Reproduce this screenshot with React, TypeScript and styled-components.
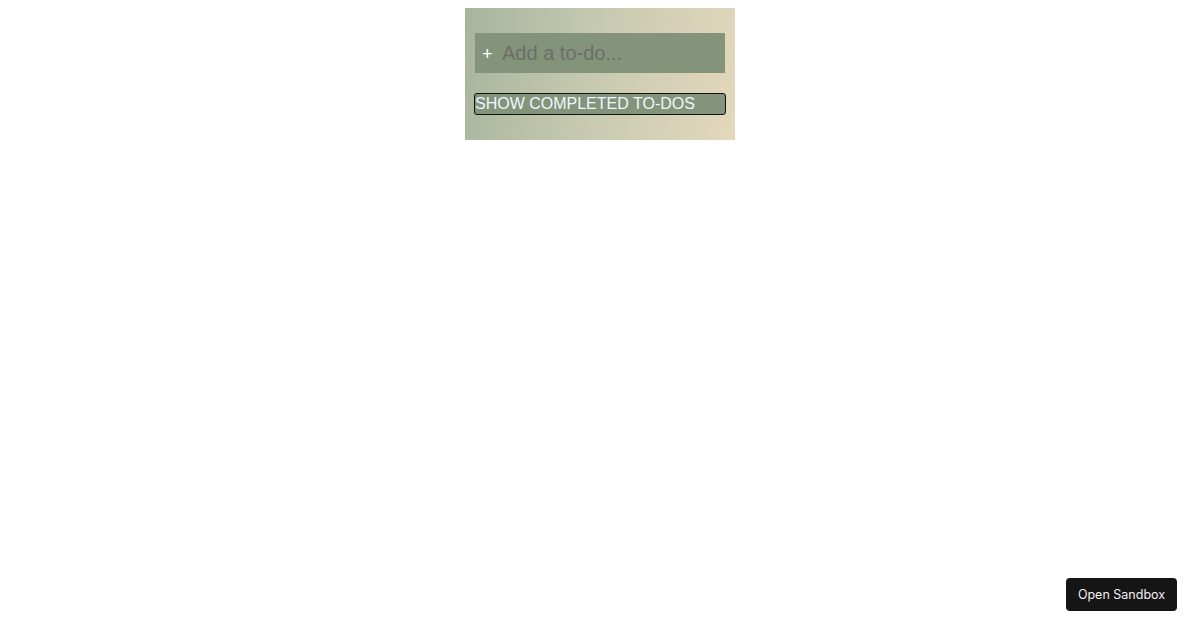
import React, { useState } from "react";
import styled, { createGlobalStyle } from "styled-components";

const GlobalStyle = createGlobalStyle`
  body {
    margin: 8px;
    background: #ffffff;
    font-family: "Liberation Sans", Arial, sans-serif;
  }
`;

const Panel = styled.div`
  width: 270px;
  margin: 0 auto;
  box-sizing: border-box;
  padding: 25px 10px 25px;
  background: linear-gradient(100deg, #a8b49c 0%, #c5c9b0 45%, #e3d8bc 100%);
  display: flex;
  flex-direction: column;
  gap: 20px;
`;

const AddRow = styled.label`
  display: flex;
  align-items: center;
  height: 40px;
  background: #84947a;
  padding: 0 0 0 7px;
`;

const Plus = styled.span`
  color: #ffffff;
  font-size: 18px;
  width: 20px;
  margin-top: 3px;
`;

const AddInput = styled.input`
  flex: 1;
  min-width: 0;
  border: none;
  outline: none;
  background: transparent;
  font-family: "Liberation Sans", Arial, sans-serif;
  font-size: 20px;
  color: #333;
  padding: 0;
  &::placeholder {
    color: #6c6e69;
  }
`;

const ToggleButton = styled.button`
  margin: 0 -1px;
  height: 22px;
  padding: 0;
  text-align: left;
  background: #84947a;
  border: 1px solid #111;
  border-radius: 3px;
  color: #f0f6ff;
  font-family: "Liberation Sans", Arial, sans-serif;
  font-size: 16px;
  text-transform: uppercase;
  line-height: 20px;
  cursor: pointer;
`;

const SandboxLink = styled.a`
  position: fixed;
  right: 23px;
  bottom: 19px;
  width: 111px;
  height: 33px;
  display: flex;
  align-items: center;
  justify-content: center;
  background: #151515;
  border-radius: 4px;
  color: #f2f2f2;
  font-family: Inter, "Liberation Sans", sans-serif;
  font-size: 12.5px;
  text-decoration: none;
`;

export default function App() {
  const [text, setText] = useState("");
  const [showDone, setShowDone] = useState(false);

  return (
    <>
      <GlobalStyle />
      <Panel>
        <AddRow>
          <Plus>+</Plus>
          <AddInput
            value={text}
            placeholder="Add a to-do..."
            onChange={(e) => setText(e.target.value)}
          />
        </AddRow>
        <ToggleButton onClick={() => setShowDone(!showDone)}>
          {showDone ? "Hide completed to-dos" : "Show completed to-dos"}
        </ToggleButton>
      </Panel>
      <SandboxLink href="#">Open Sandbox</SandboxLink>
    </>
  );
}
